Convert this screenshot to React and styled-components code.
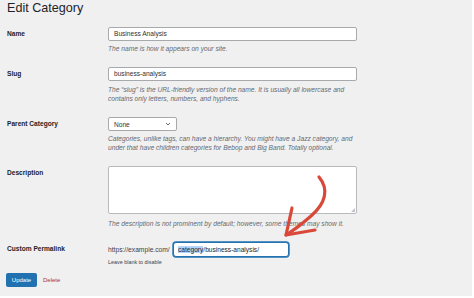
import React from "react";
import styled, { createGlobalStyle } from "styled-components";

const Global = createGlobalStyle`
  html, body { margin: 0; padding: 0; background: #ffffff; }
  body { font-family: "Liberation Sans", Arial, sans-serif; color: #1d2327; }
  * { box-sizing: border-box; }
`;

const Page = styled.div`
  position: relative;
  width: 472px;
  height: 296px;
  background: #f0f0f1;
  padding: 0 0 0 7px;
  overflow: hidden;
`;

const Title = styled.h1`
  margin: 0;
  font-size: 12.6px;
  line-height: 16px;
  font-weight: 400;
  color: #1d2327;
`;

const Form = styled.div`
  display: flex;
  flex-direction: column;
  gap: 14.5px;
  margin-top: 11px;
`;

const Row = styled.div`
  display: grid;
  grid-template-columns: 101px 249px;
  align-items: start;
`;

const Label = styled.div`
  font-size: 6.6px;
  font-weight: 700;
  line-height: 14px;
  color: #1d2327;
`;

const Field = styled.div`
  display: flex;
  flex-direction: column;
`;

const TextInput = styled.div`
  height: 14px;
  width: ${(p) => p.$w || "249px"};
  background: #fff;
  border: 1px solid #a7aaad;
  border-radius: 2px;
  padding-left: 5px;
  font-size: 6.6px;
  line-height: 12px;
  color: #2c3338;
`;

const Hint = styled.p`
  margin: ${(p) => p.$mt || "3px"} 0 0;
  font-size: 6.65px;
  line-height: 9px;
  font-style: italic;
  color: #646970;
`;

const Select = styled.div`
  height: 14px;
  width: 69px;
  background: #fff;
  border: 1px solid #a7aaad;
  border-radius: 2px;
  padding: 0 5px;
  display: flex;
  align-items: center;
  justify-content: space-between;
  font-size: 6.6px;
  color: #2c3338;
`;

const TextArea = styled.div`
  position: relative;
  height: 48px;
  width: 249px;
  background: #fff;
  border: 1px solid #b8babd;
  border-radius: 2px;
`;

const Grip = styled.svg`
  position: absolute;
  right: 1px;
  bottom: 1px;
`;

const PermalinkLine = styled.div`
  display: flex;
  align-items: center;
  height: 15px;
  font-size: 6.7px;
  color: #3c434a;
`;

const Prefix = styled.span`
  width: 65px;
`;

const FocusInput = styled.div`
  height: 15px;
  width: 116px;
  background: #fff;
  border: 1px solid #2271b1;
  box-shadow: 0 0 0 0.7px #2271b1;
  border-radius: 3px;
  padding-left: 4px;
  font-size: 6.6px;
  line-height: 13px;
  color: #1d2327;
`;

const Selected = styled.span`
  background: #b3d4fc;
`;

const Small = styled.p`
  margin: 2px 0 0;
  font-size: 5.4px;
  line-height: 7px;
  color: #3c434a;
`;

const Actions = styled.div`
  display: flex;
  align-items: center;
  gap: 6px;
  margin-top: 7px;
  margin-left: -1px;
`;

const Button = styled.div`
  height: 14px;
  width: 31px;
  background: #2271b1;
  border-radius: 2px;
  color: #fff;
  font-size: 6px;
  display: flex;
  align-items: center;
  justify-content: center;
`;

const DeleteLink = styled.span`
  font-size: 6px;
  color: #b32d2e;
`;

const Arrow = styled.svg`
  position: absolute;
  left: 0;
  top: 0;
  pointer-events: none;
`;

export default function App() {
  return (
    <>
      <Global />
      <Page>
        <Title>Edit Category</Title>
        <Form>
          <Row>
            <Label>Name</Label>
            <Field>
              <TextInput>Business Analysis</TextInput>
              <Hint $mt="2.5px">The name is how it appears on your site.</Hint>
            </Field>
          </Row>
          <Row>
            <Label>Slug</Label>
            <Field>
              <TextInput>business-analysis</TextInput>
              <Hint $mt="3.5px">
                The “slug” is the URL-friendly version of the name. It is usually all lowercase and
                contains only letters, numbers, and hyphens.
              </Hint>
            </Field>
          </Row>
          <Row>
            <Label>Parent Category</Label>
            <Field>
              <Select>
                <span>None</span>
                <svg width="6" height="4" viewBox="0 0 6 4">
                  <path d="M1 1 L3 3 L5 1" fill="none" stroke="#50575e" strokeWidth="0.9" />
                </svg>
              </Select>
              <Hint $mt="2.5px">
                Categories, unlike tags, can have a hierarchy. You might have a Jazz category, and
                under that have children categories for Bebop and Big Band. Totally optional.
              </Hint>
            </Field>
          </Row>
          <Row>
            <Label>Description</Label>
            <Field>
              <TextArea>
                <Grip width="4" height="4" viewBox="0 0 4 4">
                  <path d="M4 0 L4 4 L0 4 Z" fill="#c3c4c7" />
                </Grip>
              </TextArea>
              <Hint $mt="4.5px">
                The description is not prominent by default; however, some themes may show it.
              </Hint>
            </Field>
          </Row>
          <Row>
            <Label>Custom Permalink</Label>
            <Field>
              <PermalinkLine>
                <Prefix>https://example.com/</Prefix>
                <FocusInput>
                  <Selected>category</Selected>/business-analysis/
                </FocusInput>
              </PermalinkLine>
              <Small>Leave blank to disable</Small>
            </Field>
          </Row>
        </Form>
        <Actions>
          <Button>Update</Button>
          <DeleteLink>Delete</DeleteLink>
        </Actions>
        <Arrow width="472" height="296" viewBox="0 0 472 296">
          <path
            d="M319 177 C 329 189, 326 203, 311 216 C 302 224, 294 230, 286 235"
            fill="none"
            stroke="#d9493a"
            strokeWidth="3.2"
            strokeLinecap="round"
          />
          <path
            d="M292 208 L 286 235 L 315 230"
            fill="none"
            stroke="#d9493a"
            strokeWidth="3.2"
            strokeLinecap="round"
            strokeLinejoin="round"
          />
        </Arrow>
      </Page>
    </>
  );
}
